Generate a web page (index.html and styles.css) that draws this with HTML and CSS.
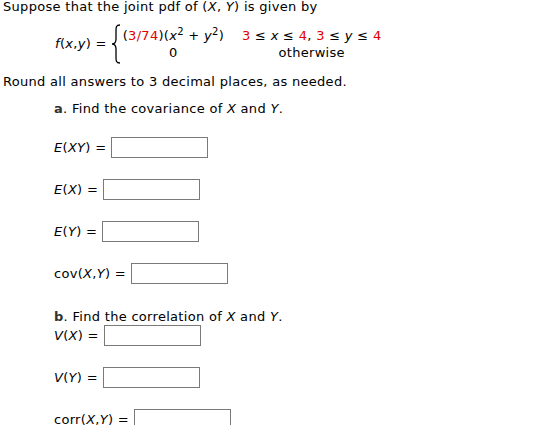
FILE: index.html
```html
<!DOCTYPE html>
<html>
<head>
<meta charset="utf-8">
<link rel="stylesheet" href="styles.css">
</head>
<body>
<div class="page">
  <p class="intro">Suppose that the joint pdf of (<i>X</i>, <i>Y</i>) is given by</p>
  <div class="formula">
    <span class="flabel"><i>f</i>(<i>x</i>,<i>y</i>) =</span>
    <svg class="brace" width="10" height="40" viewBox="0 0 10 40">
      <path d="M9 1 C5 1 5 3 5 7 L5 15 C5 18 4 20 1 20 C4 20 5 22 5 25 L5 33 C5 37 5 39 9 39" fill="none" stroke="#000" stroke-width="1.3"/>
    </svg>
    <div class="cases">
      <span class="expr">(<span class="red">3/74</span>)(<i>x</i><sup>2</sup> + <i>y</i><sup>2</sup>)</span>
      <span class="cond"><span class="red">3</span> ≤ <i>x</i> ≤ <span class="red">4</span>, <span class="red">3</span> ≤ <i>y</i> ≤ <span class="red">4</span></span>
      <span class="expr center">0</span>
      <span class="cond center">otherwise</span>
    </div>
  </div>
  <p class="round">Round all answers to 3 decimal places, as needed.</p>
  <div class="part">
    <p class="head"><b>a</b>. Find the covariance of <i>X</i> and <i>Y</i>.</p>
    <div class="rows">
      <div class="row"><span><i>E</i>(<i>XY</i>) =</span><span class="box"></span></div>
      <div class="row"><span><i>E</i>(<i>X</i>) =</span><span class="box"></span></div>
      <div class="row"><span><i>E</i>(<i>Y</i>) =</span><span class="box"></span></div>
      <div class="row"><span>cov(<i>X</i>,<i>Y</i>) =</span><span class="box"></span></div>
    </div>
    <p class="head headb"><b>b</b>. Find the correlation of <i>X</i> and <i>Y</i>.</p>
    <div class="rows">
      <div class="row"><span><i>V</i>(<i>X</i>) =</span><span class="box"></span></div>
      <div class="row"><span><i>V</i>(<i>Y</i>) =</span><span class="box"></span></div>
      <div class="row"><span>corr(<i>X</i>,<i>Y</i>) =</span><span class="box"></span></div>
    </div>
  </div>
</div>
</body>
</html>
```
FILE: styles.css
```css
html, body {
  margin: 0;
  padding: 0;
  background: #fff;
}
.page {
  font-family: "DejaVu Sans", Verdana, sans-serif;
  font-size: 13px;
  line-height: 16px;
  letter-spacing: 0.3px;
  color: #000;
  padding: 0 0 0 3px;
}
p { margin: 0; }
i { font-style: italic; }
.red { color: #e00000; }
.intro { margin-top: -1px; }
.formula {
  display: flex;
  align-items: center;
  margin: 8px 0 0 52px;
  height: 42px;
}
.flabel { margin-right: 4px; }
.brace { display: block; margin-right: 2px; }
.cases {
  display: grid;
  grid-template-columns: auto auto;
  column-gap: 18px;
  row-gap: 1px;
}
.cases sup { font-size: 10px; line-height: 0; vertical-align: 5px; }
.center { text-align: center; }
.round { margin-top: 9px; }
.part { margin-left: 51px; }
.head { margin-top: 11px; }
.head b { color: #333; }
.rows {
  display: flex;
  flex-direction: column;
  gap: 21px;
  margin-top: 20px;
}
.row {
  display: flex;
  align-items: center;
  gap: 5px;
}
.box {
  display: block;
  width: 95px;
  height: 19px;
  border: 1px solid #7a7a7a;
}
.headb { margin-top: 25px; }
.headb + .rows { margin-top: 0; }
```
